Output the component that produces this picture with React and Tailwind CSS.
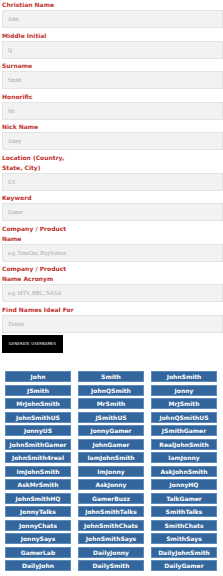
import React from 'react';

const fields = [
    { label: 'Christian Name', placeholder: 'John' },
    { label: 'Middle Initial', placeholder: 'Q' },
    { label: 'Surname', placeholder: 'Smith' },
    { label: 'Honorific', placeholder: 'Mr' },
    { label: 'Nick Name', placeholder: 'Jonny' },
    { label: 'Location (Country, State, City)', placeholder: 'US' },
    { label: 'Keyword', placeholder: 'Gamer' },
    { label: 'Company / Product Name', placeholder: 'e.g. TimeOut, PlayStation' },
    { label: 'Company / Product Name Acronym', placeholder: 'e.g. MTV, BBC, NASA' },
    { label: 'Find Names Ideal For', placeholder: 'Twitter' },
];

const names = [
    'John', 'Smith', 'JohnSmith',
    'JSmith', 'JohnQSmith', 'Jonny',
    'MrJohnSmith', 'MrSmith', 'MrJSmith',
    'JohnSmithUS', 'JSmithUS', 'JohnQSmithUS',
    'JonnyUS', 'JonnyGamer', 'JSmithGamer',
    'JohnSmithGamer', 'JohnGamer', 'RealJohnSmith',
    'JohnSmith4real', 'IamJohnSmith', 'IamJonny',
    'ImJohnSmith', 'ImJonny', 'AskJohnSmith',
    'AskMrSmith', 'AskJonny', 'JonnyHQ',
    'JohnSmithHQ', 'GamerBuzz', 'TalkGamer',
    'JonnyTalks', 'JohnSmithTalks', 'SmithTalks',
    'JonnyChats', 'JohnSmithChats', 'SmithChats',
    'JonnySays', 'JohnSmithSays', 'SmithSays',
    'GamerLab', 'DailyJonny', 'DailyJohnSmith',
    'DailyJohn', 'DailySmith', 'DailyGamer',
];

export default function App() {
    return (
        <div className="min-h-screen bg-white pl-[2px] overflow-hidden" style={{ width: 223 }}>
            <form className="w-[221px]">
                {fields.map((f) => (
                    <div key={f.label} className="mb-[2.5px]">
                        <label className="block w-[76px] text-[6px] leading-[10px] font-bold text-[#c0312d] font-['DejaVu_Sans',sans-serif]">
                            {f.label}
                        </label>
                        <input
                            type="text"
                            placeholder={f.placeholder}
                            className="block w-full h-[18px] bg-[#f2f2f2] border border-[#e4e4e4] pl-[5px] text-[5.6px] font-['Liberation_Serif',serif] placeholder:text-[#a8a8a8] outline-none"
                        />
                    </div>
                ))}
                <button
                    type="button"
                    className="block w-[61px] h-[18px] bg-black text-white text-[4.2px] font-normal uppercase tracking-[0.15px] font-['DejaVu_Sans_Condensed','DejaVu_Sans',sans-serif]"
                >
                    Generate Usernames
                </button>
            </form>

            <div className="mt-[18px] ml-[3px] w-[212px] grid grid-cols-3 gap-x-[7px] gap-y-[2.5px]">
                {names.map((n) => (
                    <div
                        key={n}
                        className="h-[11px] flex items-center justify-center bg-[#33669c] border border-[#5f8bba] text-white text-[6px] font-bold font-['DejaVu_Sans',sans-serif] whitespace-nowrap"
                    >
                        {n}
                    </div>
                ))}
            </div>
        </div>
    );
}
